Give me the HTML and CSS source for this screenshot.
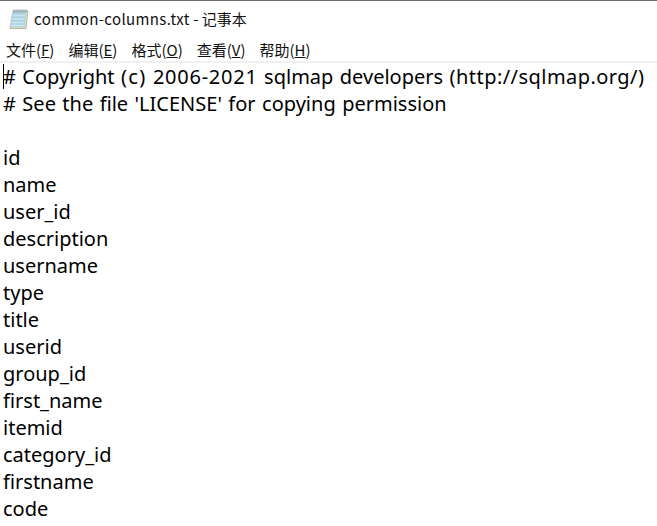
FILE: index.html
```html
<!DOCTYPE html>
<html lang="zh">
<head>
<meta charset="utf-8">
<title>common-columns.txt - 记事本</title>
<link rel="stylesheet" href="styles.css">
</head>
<body>
<div class="window">
  <header class="titlebar">
    <svg class="app-icon" viewBox="0 0 20 20" width="20" height="20" aria-hidden="true">
      <path d="M4 2 L19 2 L17 19.5 L1 19.5 Z" fill="#e9dfc4" stroke="#a8a48f" stroke-width="0.8"/>
      <path d="M4 2.5 L17.5 2.5 L15.6 18.5 L1.2 18.5 Z" fill="#a9d3e2"/>
      <path d="M3.5 6.5 L16 6.5 M3 10 L15.6 10 M2.6 13.5 L15.2 13.5 M2.2 16.5 L15 16.5" stroke="#cfe6ee" stroke-width="1.3"/>
      <path d="M5 0.5 V3.5 M7 0.5 V3.5 M9 0.5 V3.5 M11 0.5 V3.5 M13 0.5 V3.5 M15 0.5 V3.5 M17 0.5 V3.5" stroke="#87939a" stroke-width="1"/>
    </svg>
    <span class="title"><span class="title-file">common-columns.txt</span> - 记事本</span>
  </header>
  <nav class="menubar">
    <span class="menu">文件(<u>F</u>)</span>
    <span class="menu">编辑(<u>E</u>)</span>
    <span class="menu">格式(<u>O</u>)</span>
    <span class="menu">查看(<u>V</u>)</span>
    <span class="menu">帮助(<u>H</u>)</span>
  </nav>
  <main class="editor"><span class="caret"></span><pre class="text"># Copyright <span class="paren">(c)</span> <span class="wide">2006-2021</span> sqlmap developers <span class="url">(http://sqlmap.org/)</span>
# See the file 'LICENSE' for copying permission

id
name
user_id
description
username
type
title
userid
group_id
first_name
itemid
category_id
firstname
code</pre></main>
</div>
</body>
</html>
```
FILE: styles.css
```css
html, body {
  margin: 0;
  padding: 0;
  background: #fff;
  height: 100%;
  overflow: hidden;
}
.window {
  width: 657px;
  height: 526px;
  box-sizing: border-box;
  border-top: 1px solid #6f6f6f;
  font-family: "Noto Sans CJK SC", "Noto Sans", sans-serif;
  color: #000;
  overflow: hidden;
}
.titlebar {
  display: flex;
  align-items: center;
  height: 35px;
  padding: 0 0 1px 9px;
  gap: 5px;
}
.title {
  font-size: 15px;
  color: #111;
}
.title-file {
  letter-spacing: 0.38px;
}
.menubar {
  display: flex;
  gap: 14px;
  height: 24px;
  padding-left: 6px;
  font-size: 15px;
  line-height: 26px;
  color: #111;
}
.editor {
  position: relative;
  border-top: 2px solid #f0f0f0;
  padding-left: 3px;
}
.caret {
  position: absolute;
  left: 3px;
  top: 1px;
  width: 1px;
  height: 25px;
  background: #000;
}
.text {
  margin: 0;
  font-family: "Noto Sans", sans-serif;
  font-size: 20px;
  line-height: 27px;
  white-space: pre;
  word-spacing: 1.25px;
}
.paren {
  letter-spacing: 1.3px;
}
.wide {
  letter-spacing: 0.75px;
}
.url {
  letter-spacing: 0.45px;
}
```
